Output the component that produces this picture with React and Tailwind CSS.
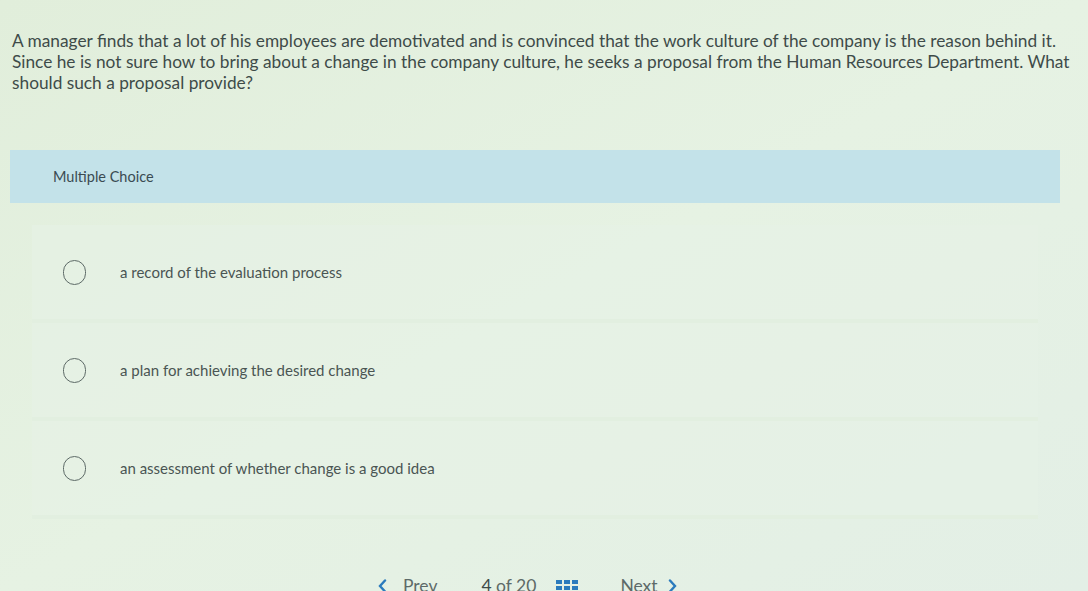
const options = [
  'a record of the evaluation process',
  'a plan for achieving the desired change',
  'an assessment of whether change is a good idea',
]

const question = [
  'A manager finds that a lot of his employees are demotivated and is convinced that the work culture of the company is the reason behind it.',
  'Since he is not sure how to bring about a change in the company culture, he seeks a proposal from the Human Resources Department. What',
  'should such a proposal provide?',
]

const Radio = () => (
  <span className="block h-[25px] w-[23px] shrink-0 rounded-full border-[1.5px] border-[#5d6a67]" aria-hidden />
)

const GridIcon = () => (
  <svg width="22" height="12" viewBox="0 0 22 12" aria-hidden>
    {[0, 1].map((r) =>
      [0, 1, 2].map((c) => (
        <rect key={`${r}-${c}`} x={c * 8} y={r * 6} width="6" height="4" fill="#2b7bbd" />
      ))
    )}
  </svg>
)

export default function App() {
  return (
    <div className="h-[591px] w-[1088px] overflow-hidden bg-linear-to-br from-[#e1eedb] via-[#e6f2e3] to-[#e3efe6] font-['Lato','Open_Sans',sans-serif] text-[#3e4b49]">
      <div className="pl-3 pt-[30px] text-[17.3px] leading-[21px]">
        {question.map((l) => (
          <p key={l} className="whitespace-nowrap">
            {l}
          </p>
        ))}
      </div>

      <section className="ml-[10px] mr-[28px] mt-[57px]">
        <div className="flex h-[53px] items-center bg-[#c3e2e9] pl-[43px] text-[14.5px] text-[#3a4b52]">Multiple Choice</div>

        <div className="mx-[22px] mt-[22px] bg-[#e6f2e6]/60">
          {options.map((o) => (
            <div key={o} className="flex h-[98px] items-center border-b-[4px] border-[#e2efe0] pl-[31px]">
              <Radio />
              <span className="ml-[34px] text-[15px] text-[#4a5553]">{o}</span>
            </div>
          ))}
        </div>
      </section>

      <nav className="mt-[54px] flex items-center pl-[378px] text-[17.5px] text-[#5d6a68]">
        <span className="flex items-center gap-[16px]">
          <svg width="9" height="14" viewBox="0 0 9 14" aria-hidden>
            <path d="M7 1.5 L2 7 L7 12.5" fill="none" stroke="#2b7bbd" strokeWidth="2.4" strokeLinecap="round" />
          </svg>
          Prev
        </span>
        <span className="ml-[44px]">
          <span className="text-[#3e4b49]">4</span> of 20
        </span>
        <span className="ml-[20px]">
          <GridIcon />
        </span>
        <span className="ml-[42px] flex items-center gap-[10px]">
          Next
          <svg width="9" height="14" viewBox="0 0 9 14" aria-hidden>
            <path d="M2 1.5 L7 7 L2 12.5" fill="none" stroke="#2b7bbd" strokeWidth="2.4" strokeLinecap="round" />
          </svg>
        </span>
      </nav>
    </div>
  )
}
